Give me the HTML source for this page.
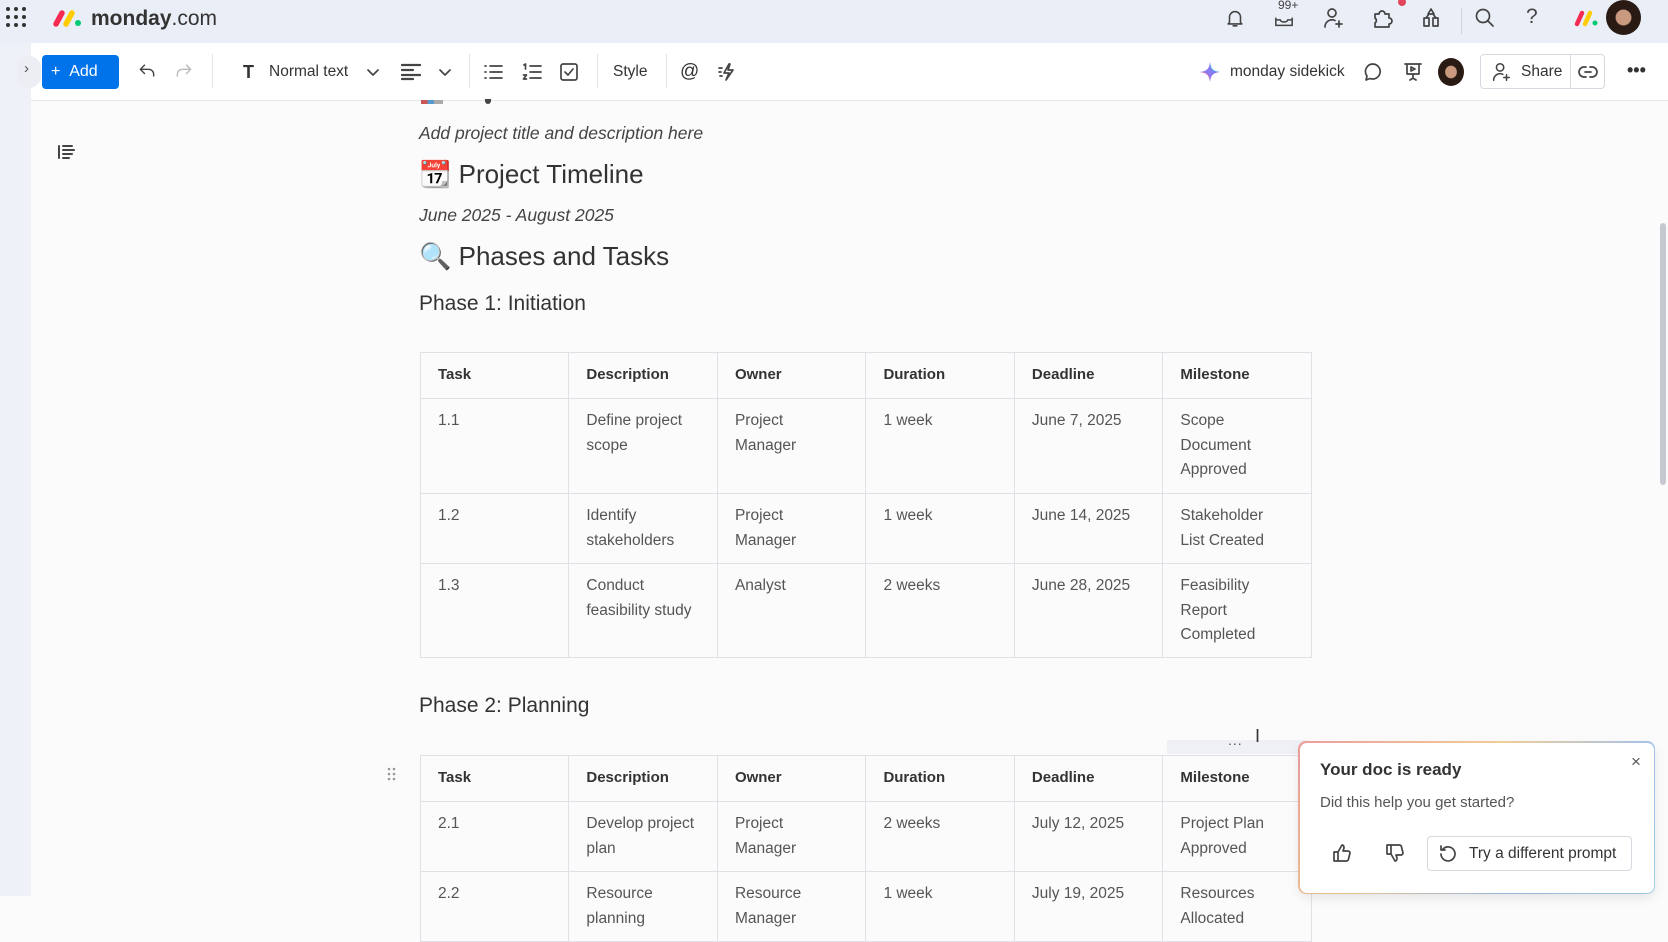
<!DOCTYPE html>
<html><head><meta charset="utf-8"><style>
*{box-sizing:border-box;margin:0;padding:0}
body{width:1668px;height:896px;overflow:hidden;background:#fbfbfc;font-family:"Liberation Sans",sans-serif;color:#323338;position:relative}
.abs{position:absolute}
.top{left:0;top:0;width:1668px;height:43px;background:#eaeef6}
.side{left:0;top:43px;width:31px;height:853px;background:#eef1f8}
.tb{left:31px;top:43px;width:1637px;height:58px;background:#fff;border-bottom:1px solid #e4e6ec}
.ic{position:absolute;stroke:#444;fill:none;stroke-width:1.7;stroke-linecap:round;stroke-linejoin:round}
.t{position:absolute;white-space:nowrap}
.div{position:absolute;width:1px;height:34px;top:54px;background:#e2e4ea}
table{position:absolute;border-collapse:collapse;font-size:15.5px;color:#555;background:#fbfbfc}
td,th{border:1px solid #dfe1e7;width:148.7px;vertical-align:top;text-align:left;padding:0 17px;line-height:24.5px}
th{font-weight:bold;color:#333;height:46px;vertical-align:middle;font-size:15px}
td{padding-top:10px}
</style></head><body>
<div class="abs top"></div>
<div class="abs side"></div>
<div class="abs tb"></div>
<svg class="abs" style="left:4px;top:5px" width="24" height="24"><g fill="#333"><circle cx="4" cy="4" r="2"/><circle cx="12" cy="4" r="2"/><circle cx="20" cy="4" r="2"/><circle cx="4" cy="12" r="2"/><circle cx="12" cy="12" r="2"/><circle cx="20" cy="12" r="2"/><circle cx="4" cy="20" r="2"/><circle cx="12" cy="20" r="2"/><circle cx="20" cy="20" r="2"/></g></svg>
<svg class="abs" style="left:52px;top:8px" width="32" height="20"><g stroke-linecap="round" stroke-width="5.5"><line x1="4" y1="16" x2="10" y2="5" stroke="#f62b54"/><line x1="14" y1="16" x2="20" y2="5" stroke="#ffcc00"/></g><circle cx="26" cy="15" r="3" fill="#00ca72"/></svg>
<div class="t" style="left:91px;top:7px;font-size:21px;color:#333"><b>monday</b>.com</div>
<svg class="ic" style="left:1224px;top:7px" width="22" height="22" viewBox="0 0 24 24"><path d="M6 17V11a6 6 0 0112 0v6l1.5 1.5h-15z M10 20.5h4"/></svg>
<div class="t" style="left:1276px;top:-2px;font-size:12px;color:#444;background:#eaeef6;padding:0 2px">99+</div>
<svg class="ic" style="left:1273px;top:9px" width="22" height="20" viewBox="0 0 24 22"><path d="M3 10v8h18v-8M3 12h5c0 3 8 3 8 0h5"/></svg>
<svg class="ic" style="left:1321px;top:6px" width="24" height="24" viewBox="0 0 24 24"><circle cx="11" cy="7" r="4"/><path d="M4 21a7 7 0 0110-6.5M18 15v6M15 18h6"/></svg>
<svg class="ic" style="left:1370px;top:6px" width="24" height="24" viewBox="0 0 24 24"><path d="M5 8h4a3 3 0 016 0h4v4a3 3 0 010 6v3H5v-4a3 3 0 000-5z"/></svg>
<div class="abs" style="left:1398px;top:-2px;width:8px;height:8px;border-radius:50%;background:#e2445c"></div>
<svg class="ic" style="left:1419px;top:6px" width="24" height="24" viewBox="0 0 24 24"><path d="M12 3l3 5h-6zM5 12h5v8H5zM14 12h5v8h-5zM7 12l3-4M17 12l-3-4"/></svg>
<div class="abs" style="left:1461px;top:8px;width:1px;height:26px;background:#cfd3dc"></div>
<svg class="ic" style="left:1473px;top:6px" width="24" height="24" viewBox="0 0 24 24"><circle cx="10" cy="10" r="6.5"/><path d="M15 15l5 5"/></svg>
<div class="t" style="left:1526px;top:5px;font-size:21px;color:#444">?</div>
<svg class="abs" style="left:1574px;top:9px" width="24" height="18"><g stroke-linecap="round" stroke-width="4.5"><line x1="3" y1="15" x2="8" y2="4" stroke="#f62b54"/><line x1="11" y1="15" x2="16" y2="4" stroke="#ffcc00"/></g><circle cx="21" cy="14" r="2.5" fill="#00ca72"/></svg>
<div class="abs" style="left:1606px;top:0;width:35px;height:35px;border-radius:50%;background:radial-gradient(ellipse at 50% 50%,#c99a80 0 30%,#2a1a14 34%)"></div>
<div class="abs" style="left:17px;top:56px;width:24px;height:32px;border-radius:12px;background:#eceef3"></div>
<div class="t" style="left:24px;top:60px;font-size:15px;color:#555">›</div>
<div class="abs" style="left:42px;top:55px;width:77px;height:34px;border-radius:4px;background:#0073ea"></div>
<div class="t" style="left:51px;top:63px;font-size:16px;color:#fff">+&nbsp;&nbsp;Add</div>
<svg class="ic" style="left:137px;top:61px" width="20" height="20" viewBox="0 0 24 24"><path d="M9 5L4 10l5 5M4 10h10a6 6 0 016 6v2"/></svg>
<svg class="ic" style="left:174px;top:61px;stroke:#bbb" width="20" height="20" viewBox="0 0 24 24"><path d="M15 5l5 5-5 5M20 10H10a6 6 0 00-6 6v2"/></svg>
<div class="div" style="left:212px"></div>
<div class="t" style="left:243px;top:62px;font-size:18px;font-weight:bold;color:#333">T</div>
<div class="t" style="left:269px;top:63px;font-size:15.5px;color:#333">Normal text</div>
<svg class="ic" style="left:366px;top:65px" width="14" height="14" viewBox="0 0 14 14"><path d="M2 5l5 5 5-5"/></svg>
<svg class="ic" style="left:401px;top:63px;stroke-width:2.2" width="20" height="18" viewBox="0 0 20 18"><path d="M1 2h18M1 7h11M1 12h18M1 16h11"/></svg>
<svg class="ic" style="left:438px;top:65px" width="14" height="14" viewBox="0 0 14 14"><path d="M2 5l5 5 5-5"/></svg>
<div class="div" style="left:469px"></div>
<svg class="ic" style="left:483px;top:63px" width="20" height="18" viewBox="0 0 20 18"><path d="M7 3h12M7 9h12M7 15h12M2 3h1M2 9h1M2 15h1"/></svg>
<svg class="ic" style="left:522px;top:63px" width="20" height="18" viewBox="0 0 20 18"><path d="M8 3h11M8 9h11M8 15h11M2 2l1.5-1v5M1.5 12h3l-3 4h3"/></svg>
<svg class="ic" style="left:559px;top:62px" width="20" height="20" viewBox="0 0 20 20"><rect x="2" y="2" width="16" height="16" rx="2"/><path d="M6 10l3 3 5-6"/></svg>
<div class="div" style="left:597px"></div>
<div class="t" style="left:613px;top:63px;font-size:15.5px;color:#333">Style</div>
<div class="div" style="left:666px"></div>
<div class="t" style="left:680px;top:61px;font-size:19px;color:#333">@</div>
<svg class="ic" style="left:717px;top:62px" width="20" height="20" viewBox="0 0 20 20"><path d="M12 2L7 11h5l-3 7 7-10h-5l2-6zM2 6h3M2 10h2M3 14h2"/></svg>
<svg class="abs" style="left:1199px;top:61px" width="22" height="22" viewBox="0 0 22 22"><path d="M11 1C12 8 14 10 21 11 14 12 12 14 11 21 10 14 8 12 1 11 8 10 10 8 11 1z" fill="#8a7cf0"/><path d="M11 1C12 8 14 10 21 11 14 11 11 9 11 1z" fill="#3fc1f0"/><path d="M1 11C8 12 10 14 11 21 11 15 9 11 1 11z" fill="#f06aa0"/></svg>
<div class="t" style="left:1230px;top:63px;font-size:15.5px;color:#333">monday sidekick</div>
<svg class="ic" style="left:1363px;top:62px" width="20" height="20" viewBox="0 0 20 20"><path d="M10 2a7.5 7.5 0 00-6 12l-1 4 4-1.5A7.5 7.5 0 1010 2z"/></svg>
<svg class="ic" style="left:1403px;top:62px" width="20" height="20" viewBox="0 0 20 20"><path d="M2 2h16M4 2v10h12V2M10 12v4M7 18l3-2 3 2M8 5l4 2-4 2z"/></svg>
<div class="abs" style="left:1438px;top:58px;width:26px;height:28px;border-radius:50%;background:radial-gradient(ellipse at 50% 50%,#c99a80 0 30%,#2a1a14 34%)"></div>
<div class="abs" style="left:1480px;top:54px;width:125px;height:35px;border:1px solid #d6d9e0;border-radius:4px;background:#fff"></div>
<div class="abs" style="left:1570px;top:54px;width:1px;height:35px;background:#d6d9e0"></div>
<svg class="ic" style="left:1490px;top:61px" width="22" height="22" viewBox="0 0 24 24"><circle cx="11" cy="7" r="4"/><path d="M4 21a7 7 0 0110-6.5M18 15v6M15 18h6"/></svg>
<div class="t" style="left:1521px;top:63px;font-size:15.5px;color:#333">Share</div>
<svg class="ic" style="left:1578px;top:63px" width="20" height="18" viewBox="0 0 20 18"><path d="M8 4H6a5 5 0 000 10h2M12 4h2a5 5 0 010 10h-2M7 9h6"/></svg>
<div class="t" style="left:1627px;top:60px;font-size:18px;color:#333;font-weight:bold;letter-spacing:0">•••</div>
<svg class="ic" style="left:57px;top:144px;stroke-width:2" width="18" height="16" viewBox="0 0 18 16"><path d="M2 2v12M6 2h9M6 6h11M6 10h9M6 14h6"/></svg>
<div class="abs" style="left:421px;top:100px;width:22px;height:4px;background:linear-gradient(90deg,#c55 0 30%,#59c 30% 60%,#aaa 60%)"></div>
<div class="abs" style="left:485px;top:99px;width:6px;height:5px;background:#444;border-radius:0 0 3px 3px"></div>
<div class="t" style="left:419px;top:123px;font-size:17.5px;font-style:italic;color:#444">Add project title and description here</div>
<div class="t" style="left:419px;top:159px;font-size:26px;color:#333">📆 Project Timeline</div>
<div class="t" style="left:419px;top:205px;font-size:17.5px;font-style:italic;color:#444">June 2025 - August 2025</div>
<div class="t" style="left:419px;top:241px;font-size:26px;color:#333">🔍 Phases and Tasks</div>
<div class="t" style="left:419px;top:292px;font-size:21px;color:#333">Phase 1: Initiation</div>
<table style="left:420px;top:352px;width:892px">
<tr><th>Task</th><th>Description</th><th>Owner</th><th>Duration</th><th>Deadline</th><th>Milestone</th></tr>
<tr style="height:95px"><td>1.1</td><td>Define project scope</td><td>Project Manager</td><td>1 week</td><td>June 7, 2025</td><td>Scope<br>Document<br>Approved</td></tr>
<tr style="height:70px"><td>1.2</td><td>Identify stakeholders</td><td>Project Manager</td><td>1 week</td><td>June 14, 2025</td><td>Stakeholder<br>List Created</td></tr>
<tr style="height:94px"><td>1.3</td><td>Conduct feasibility study</td><td>Analyst</td><td>2 weeks</td><td>June 28, 2025</td><td>Feasibility<br>Report<br>Completed</td></tr>
</table>
<div class="t" style="left:419px;top:694px;font-size:21px;color:#333">Phase 2: Planning</div>
<div class="abs" style="left:1167px;top:740px;width:140px;height:14px;background:#eef0f5"></div>
<div class="t" style="left:1228px;top:732px;font-size:14px;color:#555;letter-spacing:1px">...</div>
<div class="t" style="left:1255px;top:726px;font-size:18px;color:#333">I</div>
<svg class="abs" style="left:387px;top:767px" width="10" height="14"><g fill="#999"><circle cx="2" cy="2" r="1.3"/><circle cx="7" cy="2" r="1.3"/><circle cx="2" cy="7" r="1.3"/><circle cx="7" cy="7" r="1.3"/><circle cx="2" cy="12" r="1.3"/><circle cx="7" cy="12" r="1.3"/></g></svg>
<table style="left:420px;top:755px;width:892px">
<tr><th>Task</th><th>Description</th><th>Owner</th><th>Duration</th><th>Deadline</th><th>Milestone</th></tr>
<tr style="height:70px"><td>2.1</td><td>Develop project plan</td><td>Project Manager</td><td>2 weeks</td><td>July 12, 2025</td><td>Project Plan<br>Approved</td></tr>
<tr style="height:70px"><td>2.2</td><td>Resource planning</td><td>Resource Manager</td><td>1 week</td><td>July 19, 2025</td><td>Resources Allocated</td></tr>
</table>
<div class="abs" style="left:1660px;top:223px;width:6px;height:262px;border-radius:3px;background:#c5c8cf"></div>
<div class="abs" style="left:1298px;top:741px;width:357px;height:153px;border-radius:8px;background:linear-gradient(135deg,#f2a0a0,#f6d29a 40%,#a7c6f0 70%,#a8d8f0);padding:1.5px"><div style="width:100%;height:100%;border-radius:7px;background:#fff;box-shadow:0 4px 12px rgba(0,0,0,.1)"></div></div>
<div class="t" style="left:1320px;top:760px;font-size:17px;color:#333;font-weight:bold">Your doc is ready</div>
<div class="t" style="left:1631px;top:752px;font-size:17px;color:#555">×</div>
<div class="t" style="left:1320px;top:794px;font-size:15px;color:#555">Did this help you get started?</div>
<svg class="ic" style="left:1332px;top:843px" width="20" height="20" viewBox="0 0 20 20"><path d="M2 9h4v9H2zM6 9l4-7c2 0 2 2 2 3l-1 3h5a2 2 0 012 2l-1.5 6a2 2 0 01-2 2H6"/></svg>
<svg class="ic" style="left:1385px;top:843px" width="20" height="20" viewBox="0 0 20 20"><path d="M2 2h4v9H2zM6 11l4 7c2 0 2-2 2-3l-1-3h5a2 2 0 002-2l-1.5-6a2 2 0 00-2-2H6"/></svg>
<div class="abs" style="left:1427px;top:836px;width:205px;height:35px;border:1px solid #d6d9e0;border-radius:4px"></div>
<svg class="ic" style="left:1438px;top:844px" width="20" height="20" viewBox="0 0 20 20"><path d="M3 10a7 7 0 102-5M3 2v4h4"/></svg>
<div class="t" style="left:1469px;top:845px;font-size:15.5px;color:#333">Try a different prompt</div>
</body></html>
